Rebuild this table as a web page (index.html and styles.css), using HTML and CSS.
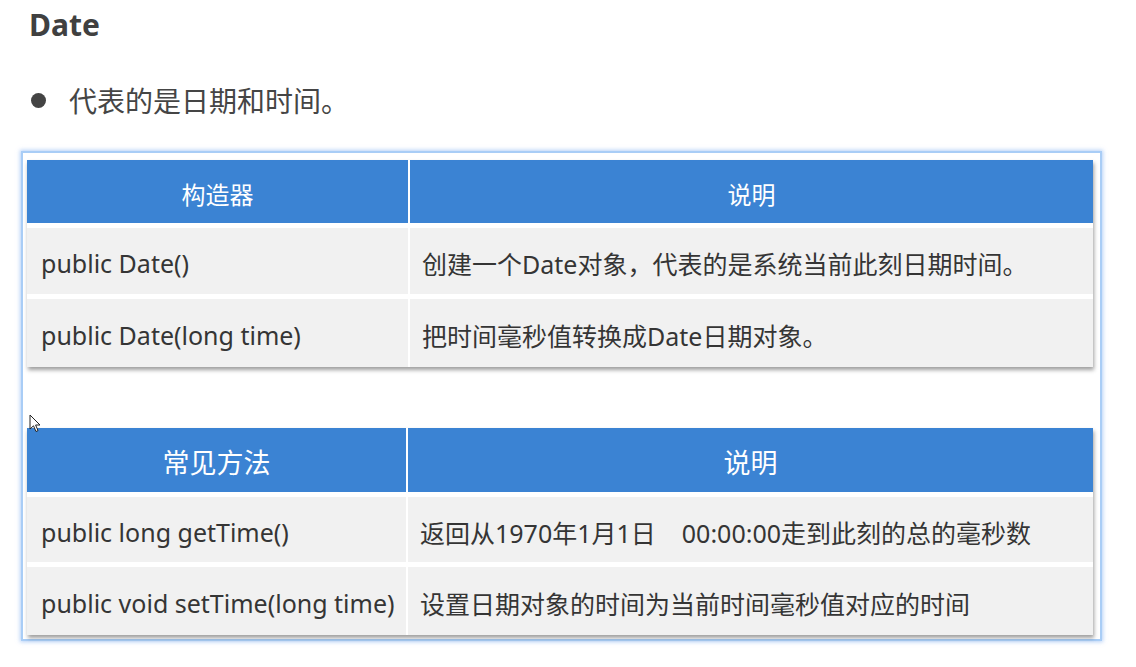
FILE: index.html
```html
<!DOCTYPE html>
<html lang="zh-CN">
<head>
<meta charset="utf-8">
<title>Date</title>
<link rel="stylesheet" href="styles.css">
</head>
<body>
<div class="page">
  <h1 class="title">Date</h1>
  <div class="bullet-row"><span class="dot"></span><span class="bullet-text">代表的是日期和时间。</span></div>
  <div class="frame">
    <div class="tbl tbl-a">
      <div class="th">构造器</div>
      <div class="th">说明</div>
      <div class="td c1 r1">public Date()</div>
      <div class="td c2 r1">创建一个Date对象，代表的是系统当前此刻日期时间。</div>
      <div class="td c1 r2">public Date(long time)</div>
      <div class="td c2 r2">把时间毫秒值转换成Date日期对象。</div>
    </div>
    <div class="tbl tbl-b">
      <div class="th">常见方法</div>
      <div class="th">说明</div>
      <div class="td c1 r1">public long getTime()</div>
      <div class="td c2 r1">返回从1970年1月1日&nbsp;&nbsp;&nbsp;&nbsp;00:00:00走到此刻的总的毫秒数</div>
      <div class="td c1 r2">public void setTime(long time)</div>
      <div class="td c2 r2">设置日期对象的时间为当前时间毫秒值对应的时间</div>
    </div>
  </div>
  <svg class="cursor" width="12" height="19" viewBox="0 0 12 19"><path d="M1 1 L1 15 L4.5 11.8 L7 17.5 L9 16.6 L6.6 11 L11 11 Z" fill="#fff" stroke="#222" stroke-width="1" stroke-linejoin="round"/></svg>
</div>
</body>
</html>
```
FILE: styles.css
```css
html, body {
  margin: 0;
  padding: 0;
  background: #ffffff;
}
.page {
  position: relative;
  width: 1136px;
  height: 667px;
  font-family: "Noto Sans", "Noto Sans CJK SC", sans-serif;
  color: #3a3a3a;
}
.title {
  margin: 0;
  padding: 5px 0 0 29px;
  font-size: 30px;
  line-height: 40px;
  font-weight: 700;
  color: #404040;
}
.bullet-row {
  display: flex;
  align-items: center;
  height: 36px;
  margin-top: 37px;
  padding-left: 31px;
}
.dot {
  width: 15px;
  height: 15px;
  border-radius: 50%;
  background: #444;
  margin-right: 23px;
}
.bullet-text {
  font-family: "Noto Sans CJK SC", sans-serif;
  font-size: 28px;
  color: #454545;
}
.frame {
  margin: 33px 0 0 21px;
  width: 1081px;
  box-sizing: border-box;
  border: 2px solid #a9cdf6;
  box-shadow: 0 0 4px 1px rgba(120, 170, 240, 0.55);
  padding: 7px 7px 4px 4px;
  background: #fff;
}
.tbl {
  display: grid;
  row-gap: 5px;
  column-gap: 2px;
  background: #fff;
  box-shadow: 1px 3px 4px rgba(0, 0, 0, 0.38);
}
.tbl-a {
  grid-template-columns: 381px 1fr;
  grid-template-rows: 63px 66px 68px;
}
.tbl-b {
  margin-top: 61px;
  grid-template-columns: 379px 1fr;
  grid-template-rows: 64px 65px 68px;
}
.th {
  background: #3b83d3;
  color: #fff;
  display: flex;
  align-items: center;
  justify-content: center;
  font-size: 24px;
  padding-top: 4px;
  box-sizing: border-box;
}
.tbl-b .th {
  font-size: 27px;
  padding-top: 2px;
}
.td {
  background: #f1f1f1;
  display: flex;
  align-items: center;
  font-size: 25px;
  color: #353535;
  box-sizing: border-box;
  padding-top: 4px;
  white-space: nowrap;
}
.c1 { padding-left: 14px; }
.c2 { padding-left: 12px; }
.cursor {
  position: absolute;
  left: 29px;
  top: 414px;
}
```
